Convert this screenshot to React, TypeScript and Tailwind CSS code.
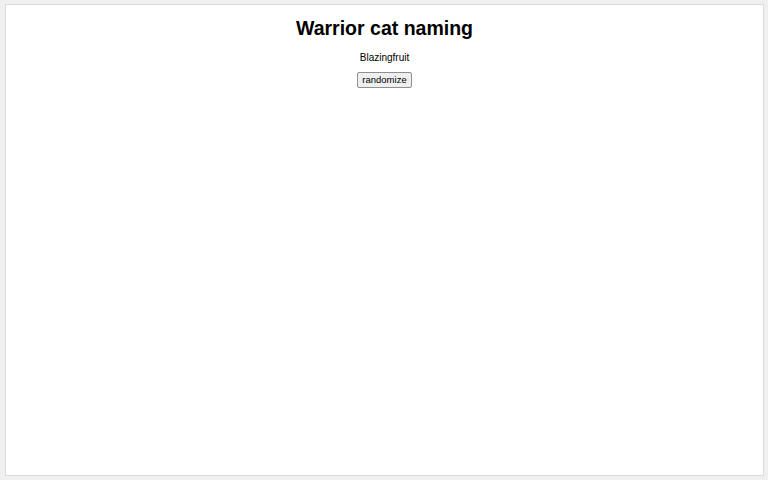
import React, { useState } from 'react';

const PREFIXES = ['Blazing', 'Storm', 'Moss', 'Ash', 'Thistle', 'Frost'];
const SUFFIXES = ['fruit', 'claw', 'pelt', 'fur', 'heart', 'tail'];

export default function App() {
  const [name, setName] = useState('Blazingfruit');

  const randomize = () => {
    const p = PREFIXES[Math.floor(Math.random() * PREFIXES.length)];
    const s = SUFFIXES[Math.floor(Math.random() * SUFFIXES.length)];
    setName(p + s);
  };

  return (
    <div className="h-[480px] w-[768px] bg-[#f0f0f0] pl-[5px] pr-[4px] pt-[4px] pb-[4px] font-['Liberation_Sans',Arial,sans-serif]">
      <div className="flex h-[472px] flex-col items-center border border-[#dcdcdc] bg-white">
        <h1 className="mt-[12px] text-[19.5px] font-bold leading-[22px] text-black">Warrior cat naming</h1>
        <p className="mt-[13px] text-[10px] leading-[12px] text-black">{name}</p>
        <button
          onClick={randomize}
          className="mt-[8px] h-[16px] rounded-[2px] border border-[#8f8f8f] bg-[#efefef] px-[4px] text-[9.5px] leading-[12px] text-black"
        >
          randomize
        </button>
      </div>
    </div>
  );
}
